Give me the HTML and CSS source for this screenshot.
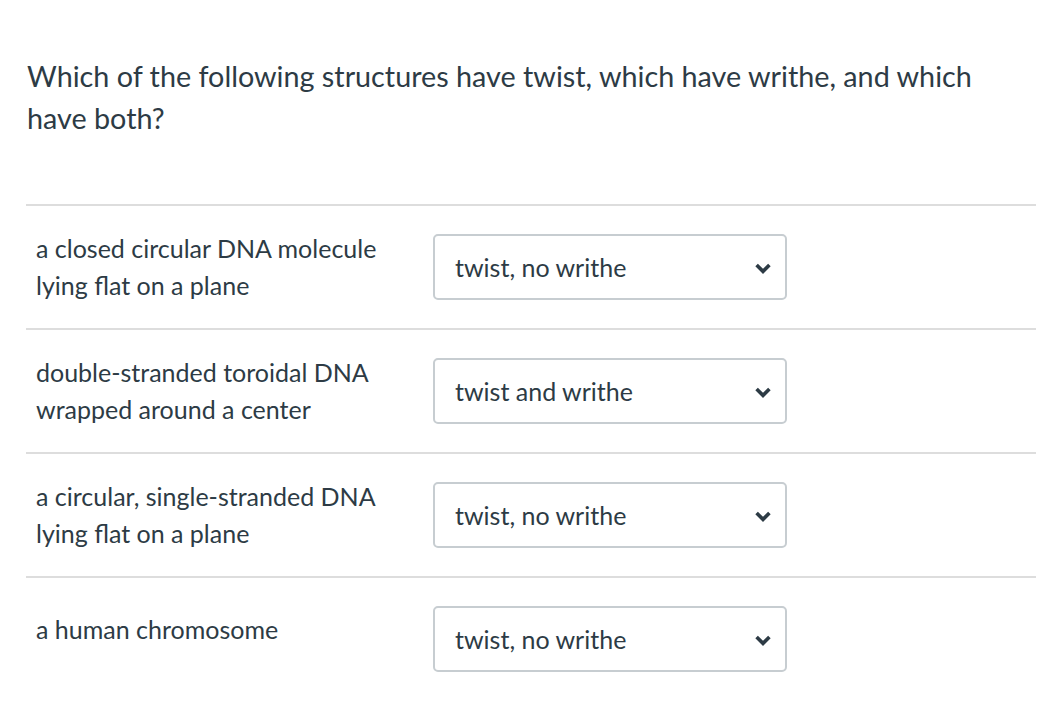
FILE: index.html
```html
<!DOCTYPE html>
<html lang="en">
<head>
<meta charset="utf-8">
<title>Matching question</title>
<link rel="stylesheet" href="styles.css">
</head>
<body>
<div class="question">
  <p class="prompt">Which of the following structures have twist, which have writhe, and which have both?</p>
  <div class="answers">
    <div class="row">
      <div class="label">a closed circular DNA molecule lying flat on a plane</div>
      <div class="select"><span class="value">twist, no writhe</span><svg class="chev" width="16" height="11" viewBox="0 0 16 11"><path d="M1.6 2 L8 8.4 L14.4 2" fill="none" stroke="#2d3b45" stroke-width="3.6"/></svg></div>
    </div>
    <div class="row">
      <div class="label">double-stranded toroidal DNA wrapped around a center</div>
      <div class="select"><span class="value">twist and writhe</span><svg class="chev" width="16" height="11" viewBox="0 0 16 11"><path d="M1.6 2 L8 8.4 L14.4 2" fill="none" stroke="#2d3b45" stroke-width="3.6"/></svg></div>
    </div>
    <div class="row">
      <div class="label">a circular, single-stranded DNA lying flat on a plane</div>
      <div class="select"><span class="value">twist, no writhe</span><svg class="chev" width="16" height="11" viewBox="0 0 16 11"><path d="M1.6 2 L8 8.4 L14.4 2" fill="none" stroke="#2d3b45" stroke-width="3.6"/></svg></div>
    </div>
    <div class="row">
      <div class="label">a human chromosome</div>
      <div class="select"><span class="value">twist, no writhe</span><svg class="chev" width="16" height="11" viewBox="0 0 16 11"><path d="M1.6 2 L8 8.4 L14.4 2" fill="none" stroke="#2d3b45" stroke-width="3.6"/></svg></div>
    </div>
  </div>
</div>
</body>
</html>
```

FILE: styles.css
```css
html, body {
  margin: 0;
  padding: 0;
  background: #ffffff;
}

body {
  font-family: Lato, "Open Sans", "Liberation Sans", sans-serif;
  color: #2d3b45;
}

.question {
  padding: 55px 26px 0 26px;
}

.prompt {
  margin: 0 40px 65px 1px;
  font-size: 28.75px;
  line-height: 42px;
}

.row {
  display: flex;
  align-items: center;
  min-height: 74px;
  padding: 24px 0;
  border-top: 2px solid #dddddd;
}

.label {
  flex: 0 0 377px;
  min-height: 56px;
  padding: 0 20px 0 10px;
  font-size: 25px;
  line-height: 37px;
}

.select {
  box-sizing: border-box;
  width: 354px;
  height: 66px;
  display: flex;
  align-items: center;
  justify-content: space-between;
  padding: 0 14px 0 20px;
  border: 2px solid #c7cdd1;
  border-radius: 5px;
  font-size: 25px;
}

.value {
  line-height: 1;
}

.chev {
  display: block;
  margin-top: 2px;
}
```
